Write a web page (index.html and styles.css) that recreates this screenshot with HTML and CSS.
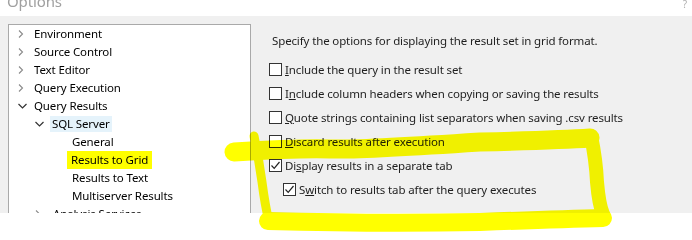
FILE: index.html
```html
<!DOCTYPE html>
<html>
<head>
<meta charset="utf-8">
<link rel="stylesheet" href="styles.css">
</head>
<body>
<div class="page">
  <div class="titlebar">
    <span class="title">Options</span>
    <span class="help">?</span>
  </div>
  <div class="main">
    <div class="tree">
      <div class="row l0"><span class="chev"><svg width="6" height="8" viewBox="0 0 6 8"><path d="M1 0.5 L4.5 4 L1 7.5" fill="none" stroke="#8a8a8a" stroke-width="1.1"/></svg></span><span class="label">Environment</span></div>
      <div class="row l0"><span class="chev"><svg width="6" height="8" viewBox="0 0 6 8"><path d="M1 0.5 L4.5 4 L1 7.5" fill="none" stroke="#8a8a8a" stroke-width="1.1"/></svg></span><span class="label">Source Control</span></div>
      <div class="row l0"><span class="chev"><svg width="6" height="8" viewBox="0 0 6 8"><path d="M1 0.5 L4.5 4 L1 7.5" fill="none" stroke="#8a8a8a" stroke-width="1.1"/></svg></span><span class="label">Text Editor</span></div>
      <div class="row l0"><span class="chev"><svg width="6" height="8" viewBox="0 0 6 8"><path d="M1 0.5 L4.5 4 L1 7.5" fill="none" stroke="#8a8a8a" stroke-width="1.1"/></svg></span><span class="label">Query Execution</span></div>
      <div class="row l0"><span class="chev"><svg width="9" height="6" viewBox="0 0 9 6"><path d="M0.5 1 L4.5 5 L8.5 1" fill="none" stroke="#333" stroke-width="1.2"/></svg></span><span class="label">Query Results</span></div>
      <div class="row l1"><span class="chev"><svg width="9" height="6" viewBox="0 0 9 6"><path d="M0.5 1 L4.5 5 L8.5 1" fill="none" stroke="#333" stroke-width="1.2"/></svg></span><span class="label sel">SQL Server</span></div>
      <div class="row l2"><span class="chev"></span><span class="label">General</span></div>
      <div class="row l2"><span class="chev"></span><span class="label mark">Results to Grid</span></div>
      <div class="row l2"><span class="chev"></span><span class="label">Results to Text</span></div>
      <div class="row l2"><span class="chev"></span><span class="label">Multiserver Results</span></div>
      <div class="row l1"><span class="chev"><svg width="6" height="8" viewBox="0 0 6 8"><path d="M1 0.5 L4.5 4 L1 7.5" fill="none" stroke="#8a8a8a" stroke-width="1.1"/></svg></span><span class="label">Analysis Services</span></div>
    </div>
    <div class="panel">
      <div class="intro">Specify the options for displaying the result set in grid format.</div>
      <div class="opt"><span class="box"></span><span><u>I</u>nclude the query in the result set</span></div>
      <div class="opt"><span class="box"></span><span>I<u>n</u>clude column headers when copying or saving the results</span></div>
      <div class="opt"><span class="box"></span><span><u>Q</u>uote strings containing list separators when saving .csv results</span></div>
      <div class="opt"><span class="box"></span><span><u>D</u>iscard results after execution</span></div>
      <div class="opt"><span class="box"><svg width="11" height="11" viewBox="0 0 11 11"><path d="M1.5 5.5 L4.2 8.3 L9.5 2" fill="none" stroke="#222" stroke-width="1.2"/></svg></span><span>Di<u>s</u>play results in a separate tab</span></div>
      <div class="opt sub"><span class="box"><svg width="11" height="11" viewBox="0 0 11 11"><path d="M1.5 5.5 L4.2 8.3 L9.5 2" fill="none" stroke="#222" stroke-width="1.2"/></svg></span><span>S<u>w</u>itch to results tab after the query executes</span></div>
    </div>
  </div>
  <svg class="scribble" width="692" height="235" viewBox="0 0 692 235">
    <g fill="none" stroke="#ffff00" stroke-linecap="round" stroke-linejoin="round">
      <path d="M234 152 Q300 148 330 149 T480 142 Q560 140 590 138" stroke-width="19"/>
      <path d="M591 136 Q596 160 597 182 Q599 205 603 214" stroke-width="14"/>
      <path d="M268 221 Q380 224 480 222 Q560 219 603 218" stroke-width="18"/>
      <path d="M254 136 Q259 160 262 182 Q265 205 269 222" stroke-width="9"/>
    </g>
  </svg>
</div>
</body>
</html>
```
FILE: styles.css
```css
html, body {
  margin: 0;
  padding: 0;
  background: #ffffff;
}
.page {
  position: relative;
  width: 692px;
  height: 235px;
  overflow: hidden;
  font-family: "Noto Sans", "Open Sans", sans-serif;
  font-size: 11.5px;
  letter-spacing: -0.13px;
  color: #1e1e1e;
}
.titlebar {
  height: 16px;
  overflow: hidden;
  display: flex;
  justify-content: space-between;
  background: #ffffff;
}
.title {
  margin-top: -9px;
  margin-left: 7px;
  font-size: 15px;
  line-height: 20px;
  color: #a0a0a0;
}
.help {
  margin-top: -2px;
  margin-right: 5px;
  font-size: 10px;
  line-height: 12px;
  color: #b0b0b0;
}
.main {
  height: 197px;
  overflow: hidden;
  background: #f0f0f0;
  display: flex;
  padding: 8px 0 0 8px;
  box-sizing: border-box;
}
.tree {
  width: 243px;
  height: 220px;
  flex: none;
  box-sizing: border-box;
  border: 1px solid #a9a9a9;
  background: #ffffff;
  color: #000000;
}
.row {
  height: 18px;
  display: flex;
  align-items: center;
  white-space: nowrap;
}
.l0 { padding-left: 0; }
.l1 { padding-left: 19px; }
.l2 { padding-left: 38px; }
.chev {
  width: 25px;
  flex: none;
  display: flex;
  align-items: center;
  padding-left: 9px;
  box-sizing: border-box;
}
.l1 .chev { padding-left: 7px; }
.label {
  line-height: 18px;
}
.sel {
  background: #e5f3fb;
  padding: 0 2px;
  margin-left: -3px;
  line-height: 16px;
}
.mark {
  background: #ffff00;
  padding: 0 4px;
  margin-left: -5px;
}
.panel {
  padding-left: 18px;
  padding-top: 8px;
  display: flex;
  flex-direction: column;
  white-space: nowrap;
}
.intro {
  margin-left: 3px;
  line-height: 18px;
  margin-bottom: 7px;
}
.opt {
  height: 24px;
  display: flex;
  align-items: center;
  gap: 3px;
}
.opt.sub {
  padding-left: 14px;
}
.box {
  width: 13px;
  height: 13px;
  box-sizing: border-box;
  border: 1px solid #333333;
  background: #ffffff;
  display: flex;
  align-items: center;
  justify-content: center;
  flex: none;
}
.scribble {
  position: absolute;
  left: 0;
  top: 0;
  pointer-events: none;
  mix-blend-mode: multiply;
}
```
